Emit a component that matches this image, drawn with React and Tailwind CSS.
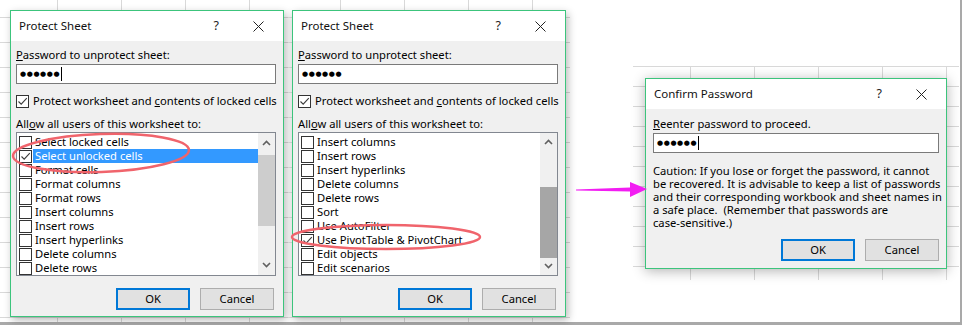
import React from 'react';

const font = { fontFamily: '"Noto Sans", "Open Sans", sans-serif' };

function Check({ checked }) {
  return (
    <span className="w-[13px] h-[13px] shrink-0 border border-[#333333] bg-white flex items-center justify-center">
      {checked && (
        <svg width="11" height="11" viewBox="0 0 11 11">
          <path d="M1.5 5.5 L4.2 8.2 L9.8 2.2" fill="none" stroke="#3c3c3c" strokeWidth="1.1" />
        </svg>
      )}
    </span>
  );
}

function Chevron({ up }) {
  return (
    <svg width="9" height="6" viewBox="0 0 9 6">
      <path d={up ? 'M1 5 L4.5 1.5 L8 5' : 'M1 1 L4.5 4.5 L8 1'} fill="none" stroke="#606060" strokeWidth="1.6" />
    </svg>
  );
}

function TitleBar({ title }) {
  return (
    <div className="h-[30px] bg-white flex items-center justify-between pl-[8px] pr-[19px]">
      <span className="text-[11.5px] text-[#111]">{title}</span>
      <div className="flex items-center gap-[34px]">
        <span className="text-[12.5px] text-[#222]">?</span>
        <svg width="11" height="11" viewBox="0 0 11 11">
          <path d="M0.5 0.5 L10.5 10.5 M10.5 0.5 L0.5 10.5" stroke="#222" strokeWidth="1" />
        </svg>
      </div>
    </div>
  );
}

function Password({ caret }) {
  return (
    <div className="h-[20px] bg-white border border-[#7a7a7a] flex items-center pl-[3px]">
      <span className="text-[7px] tracking-[0.6px] leading-none text-black" style={{ fontFamily: '"DejaVu Sans", sans-serif' }}>
        ●●●●●●
      </span>
      {caret && <span className="w-px h-[14px] bg-black ml-px" />}
    </div>
  );
}

function Buttons() {
  return (
    <div className="flex justify-end gap-[10px]">
      <button className="w-[74px] h-[22px] bg-[#e1e1e1] border-2 border-[#0078d7] text-[11.2px] text-black flex items-center justify-center">
        OK
      </button>
      <button className="w-[74px] h-[22px] bg-[#e1e1e1] border border-[#adadad] text-[11.2px] text-black flex items-center justify-center">
        Cancel
      </button>
    </div>
  );
}

function ProtectDialog({ items, caret, thumbTop, thumbColor }) {
  return (
    <div className="w-[274px] h-[307px] border border-[#3cc47c] bg-[#f0f0f0] shadow-[2px_3px_8px_rgba(0,0,0,0.28)] flex flex-col">
      <TitleBar title="Protect Sheet" />
      <div className="flex flex-col pl-[5px] pr-[7px] pt-[7px] text-[11.2px] leading-[14px] text-black">
        <div>
          <u>P</u>assword to unprotect sheet:
        </div>
        <div className="mt-[2px]">
          <Password caret={caret} />
        </div>
        <div className="mt-[10px] flex items-center gap-[4px] whitespace-nowrap">
          <Check checked />
          <span>
            Protect worksheet and <u>c</u>ontents of locked cells
          </span>
        </div>
        <div className="mt-[9px]">
          All<u>o</u>w all users of this worksheet to:
        </div>
        <div className="mt-[1px] h-[144px] border border-[#828790] bg-white flex">
          <div className="flex-1 pt-[2px] pl-[2px] flex flex-col">
            {items.map((it) => (
              <div key={it.label} className="h-[14px] flex items-center">
                <Check checked={it.checked} />
                <span
                  className={`ml-[1px] pl-[2px] h-[14px] flex-1 flex items-center whitespace-nowrap ${
                    it.selected ? 'bg-[#3399ff] text-white' : ''
                  }`}
                >
                  {it.label}
                </span>
              </div>
            ))}
          </div>
          <div className="w-[17px] bg-[#f0f0f0] flex flex-col items-center">
            <div className="h-[20px] flex items-center justify-center">
              <Chevron up />
            </div>
            <div className="flex-1 w-full flex flex-col">
              <div className={`w-full ${thumbTop}`} />
              <div className={`w-full h-[71px] ${thumbColor}`} />
            </div>
            <div className="h-[20px] flex items-center justify-center">
              <Chevron />
            </div>
          </div>
        </div>
        <div className="mt-[12px] pr-[2px]">
          <Buttons />
        </div>
      </div>
    </div>
  );
}

const list1 = [
  { label: 'Select locked cells' },
  { label: 'Select unlocked cells', checked: true, selected: true },
  { label: 'Format cells' },
  { label: 'Format columns' },
  { label: 'Format rows' },
  { label: 'Insert columns' },
  { label: 'Insert rows' },
  { label: 'Insert hyperlinks' },
  { label: 'Delete columns' },
  { label: 'Delete rows' },
];

const list2 = [
  { label: 'Insert columns' },
  { label: 'Insert rows' },
  { label: 'Insert hyperlinks' },
  { label: 'Delete columns' },
  { label: 'Delete rows' },
  { label: 'Sort' },
  { label: 'Use AutoFilter' },
  { label: 'Use PivotTable & PivotChart', checked: true },
  { label: 'Edit objects' },
  { label: 'Edit scenarios' },
];

const grid =
  'bg-[linear-gradient(to_right,#d9d9d9_1px,transparent_1px),linear-gradient(to_bottom,#d9d9d9_1px,transparent_1px)]';

export default function App() {
  return (
    <div className="w-[963px] h-[325px] bg-white overflow-hidden" style={font}>
      <div className="relative w-[962px] h-[325px] border-r-[2px] border-b-[3px] border-[#a9a9a9] flex">
        <div className={`w-[288px] h-full ${grid} bg-size-[64px_25px] bg-position-[57px_17px] pl-[10px] pt-[10px]`}>
          <ProtectDialog items={list1} caret thumbTop="h-[2px]" thumbColor="bg-[#cdcdcd]" />
        </div>
        <div className={`w-[282px] h-full ${grid} bg-size-[64px_25px] bg-position-[52px_17px] pl-[4px] pt-[10px]`}>
          <ProtectDialog items={list2} thumbTop="h-[36px]" thumbColor="bg-[#a6a6a6]" />
        </div>
        <div className="w-[63px]" />
        <div className={`mt-[66px] w-[326px] h-[214px] ${grid} bg-size-[64px_20px] bg-position-[57px_0px] pl-[12px] pt-[12px]`}>
          <div className="relative w-[302px] h-[191px] border border-[#3cc47c] bg-[#f0f0f0] shadow-[0_2px_12px_rgba(0,0,0,0.3)] flex flex-col">
            <TitleBar title="Confirm Password" />
            <div className="flex flex-col pl-[7px] pr-[7px] pt-[8px] text-[11.2px] leading-[14px] text-black">
              <div>
                <u>R</u>eenter password to proceed.
              </div>
              <div className="mt-[2px]">
                <Password caret />
              </div>
              <div className="mt-[11px] leading-[13px] whitespace-nowrap">
                Caution: If you lose or forget the password, it cannot
                <br />
                be recovered. It is advisable to keep a list of passwords
                <br />
                and their corresponding workbook and sheet names in
                <br />
                a safe place.&nbsp; (Remember that passwords are
                <br />
                case-sensitive.)
              </div>
              <div className="mt-[10px]">
                <Buttons />
              </div>
            </div>
          </div>
        </div>

        <svg className="absolute left-0 top-0 pointer-events-none" width="963" height="325">
          <ellipse cx="101" cy="153" rx="88" ry="19" fill="none" stroke="#f0646c" strokeWidth="2.5" transform="rotate(-2 101 153)" />
          <ellipse cx="386" cy="237" rx="94" ry="12" fill="none" stroke="#f0646c" strokeWidth="2.5" />
          <polygon points="576,189.5 630,187.5 630,182 647,189 630,197 630,191.5 576,190.5" fill="#f21df2" />
        </svg>
      </div>
    </div>
  );
}
